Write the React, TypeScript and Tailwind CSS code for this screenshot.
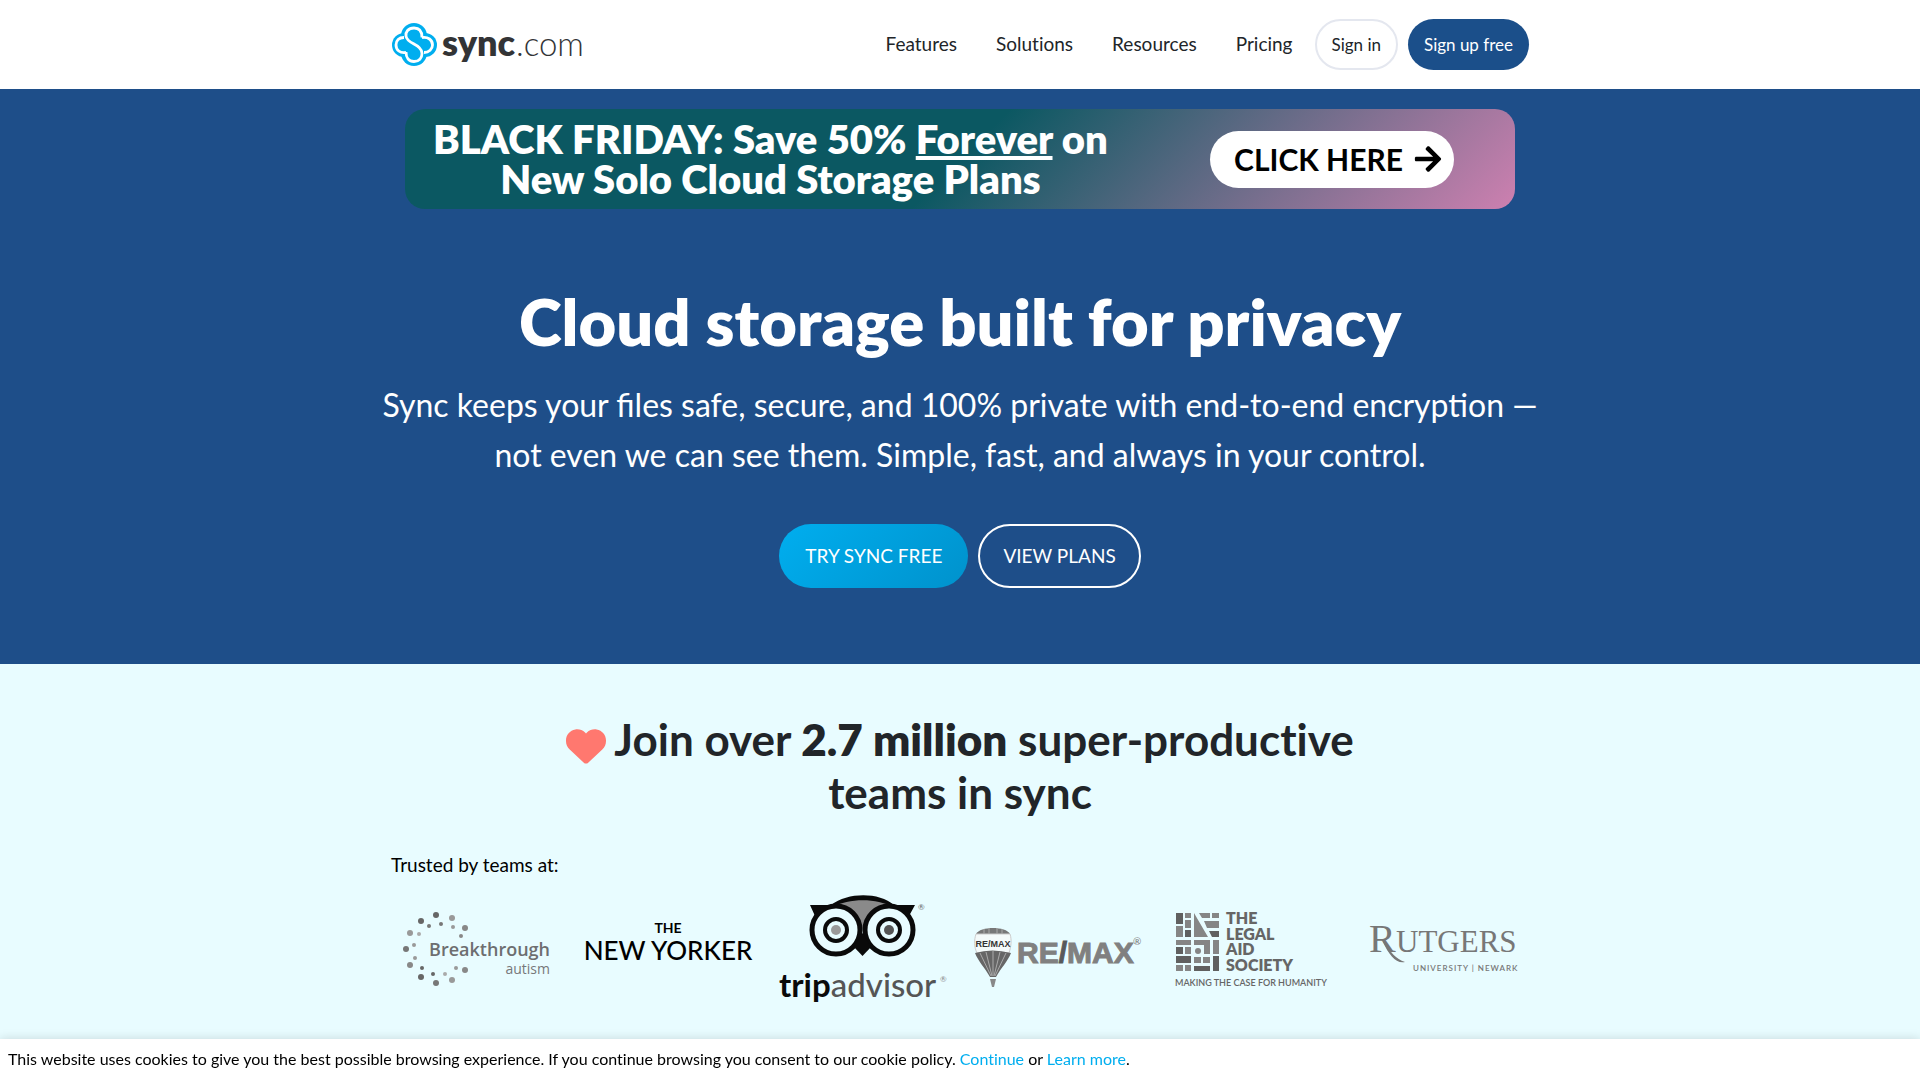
import { FaArrowRight } from "react-icons/fa";
import { FaHeart } from "react-icons/fa6";

const navLinks = ["Features", "Solutions", "Resources", "Pricing"];

const SyncLogo = () => (
    <svg width="194" height="52" viewBox="0 -3 194 52" role="img" aria-label="sync.com">
        <g fill="#00aeef">
            <circle cx="23" cy="14" r="13" />
            <circle cx="23" cy="31" r="13" />
            <circle cx="13" cy="23" r="12" />
            <circle cx="34" cy="23" r="12" />
        </g>
        <g fill="none" stroke="#fff" strokeWidth="2.8">
            <path d="M31 15.500C31 9 28 6 23 6C17 6 14.500 10 15 14C15.500 22 31 22 31 31.500C31 36 28 39.500 23 39.500C18 39.500 15 36 15 30" />
            <path d="M13 15.500C8 15.500 5 18.500 5 23C5 28 9 31.500 15 30.500" />
            <path d="M33 30.500C38 30.500 41.500 27 41.500 23C41.500 18 37 14.500 31 15.500" />
        </g>
        <text x="51" y="34" fontFamily="Lato, sans-serif" fontSize="36" fontWeight="800" fill="#333436">sync</text>
        <text x="125" y="34" fontFamily="Lato, sans-serif" fontSize="33" fontWeight="300" fill="#333436">.com</text>
    </svg>
);

const dots = [
    [33, 5, 3, "#666"], [49, 8, 3, "#999"], [18, 11, 3, "#666"], [62, 18, 3, "#888"],
    [7, 23, 3, "#999"], [3, 39, 3, "#777"], [7, 55, 3, "#888"], [18, 67, 3, "#666"],
    [33, 73, 3, "#777"], [49, 70, 3, "#999"], [62, 60, 3, "#888"], [26, 16, 2, "#777"],
    [38, 14, 2, "#777"], [50, 17, 2, "#999"], [58, 26, 2, "#888"], [16, 24, 2, "#aaa"],
    [11, 35, 2, "#999"], [12, 48, 2, "#999"], [19, 58, 2, "#666"], [30, 64, 2, "#666"],
    [42, 64, 2, "#aaa"], [53, 58, 2, "#999"],
];

const Breakthrough = () => (
    <svg width="152" height="78" viewBox="-3 0 152 78" role="img" aria-label="Breakthrough autism">
        {dots.map(([x, y, r, fill]) => (
            <circle key={`${x}-${y}`} cx={x} cy={y} r={r} fill={String(fill)} />
        ))}
        <text x="147" y="46" textAnchor="end" fontFamily="Open Sans, sans-serif" fontSize="18" fontWeight="600" fill="#6d6e70">Breakthrough</text>
        <text x="147" y="64" textAnchor="end" fontFamily="Open Sans, sans-serif" fontSize="14" fill="#77787a">autism</text>
    </svg>
);

const NewYorker = () => (
    <svg width="172" height="60" viewBox="0 0 172 60" role="img" aria-label="The New Yorker">
        <text x="84" y="14" textAnchor="middle" fontFamily="Lato, sans-serif" fontSize="14" fontWeight="700">THE</text>
        <text x="84" y="41" textAnchor="middle" fontFamily="Lato, sans-serif" fontSize="26" fontWeight="500">NEW YORKER</text>
    </svg>
);

const Tripadvisor = () => (
    <svg width="170" height="116" viewBox="0 0 170 116" role="img" aria-label="tripadvisor">
        <path d="M32 14H53C70 1 101 1 116 14H137L131 25H37Z" fill="#0a0a0a" />
        <path d="M55 16C70 7 100 7 114 16C97 17 87 26 84.500 39C82 26 73 17 55 16Z" fill="#8a8a8a" />
        <circle cx="58" cy="39" r="24" fill="#e8fcff" stroke="#0a0a0a" strokeWidth="5" />
        <circle cx="111" cy="39" r="24" fill="#e8fcff" stroke="#0a0a0a" strokeWidth="5" />
        <circle cx="58" cy="39" r="11" fill="none" stroke="#0a0a0a" strokeWidth="4" />
        <circle cx="111" cy="39" r="11" fill="none" stroke="#0a0a0a" strokeWidth="4" />
        <circle cx="58" cy="39" r="5" fill="#999" />
        <circle cx="111" cy="39" r="5" fill="#555" />
        <path d="M76 56L84.500 65L93 56L84.500 42Z" fill="#0a0a0a" />
        <text x="140" y="19" fontFamily="Lato, sans-serif" fontSize="8" fill="#666">®</text>
        <text x="1" y="106" fontFamily="Lato, sans-serif" fontSize="33" fontWeight="700" fill="#0a0a0a">
            trip<tspan fill="#555" fontWeight="500">advisor</tspan>
        </text>
        <text x="162" y="91" fontFamily="Lato, sans-serif" fontSize="8" fill="#888">®</text>
    </svg>
);

const Remax = () => (
    <svg width="172" height="80" viewBox="-1 -1 172 80" role="img" aria-label="RE/MAX">
        <path d="M4 24C8 16 34 16 38 24Z" fill="#777" />
        <path d="M4 24H38C40 30 39 37 37 43H5C2 37 2 30 4 24Z" fill="#f4fafa" stroke="#ccc" strokeWidth="1" />
        <path d="M3 43Q20 38 39 43C36 51 29 58 24 67H18C13 58 6 51 3 43Z" fill="#666" />
        <g stroke="#aaa" strokeWidth="1" fill="none">
            <path d="M8 43L19 66M14 42L20 66M21 41V66M28 42L22 66M34 43L23 66" />
            <path d="M12 19V24M17 18V24M25 18V24M30 19V24" />
        </g>
        <path d="M18 69H24L22 77H20Z" fill="#888" />
        <text x="21" y="37" textAnchor="middle" fontFamily="Liberation Sans, sans-serif" fontSize="9" fontWeight="700" fill="#333">RE/MAX</text>
        <text x="45" y="53" fontFamily="Liberation Sans, sans-serif" fontSize="30" fontWeight="700" fill="#808080" stroke="#808080" strokeWidth="1">
            RE<tspan fill="#58595b" stroke="#58595b">/</tspan>MAX
        </text>
        <text x="161" y="35" fontFamily="Lato, sans-serif" fontSize="10" fill="#777">®</text>
    </svg>
);

const LegalAid = () => (
    <svg width="156" height="86" viewBox="-4 -6 156 86" role="img" aria-label="The Legal Aid Society">
        <g fill="#858585">
            <path d="M9 1H15V6H9ZM9 8H15V16H9ZM0 14H7V25H0ZM18 1L32 25H18ZM23 1H34V6H26ZM36 1H43V6H36ZM28 9H43V16H31Z" />
            <path d="M0 28H15V33H0ZM18 28H34V42H28V33H18ZM37 28H43V42H37ZM9 35H15V42H9ZM18 45H25V51H18ZM27 45H34V51H27ZM0 53H7V59H0ZM9 53H15V59H9Z" />
            <circle cx="22" cy="39" r="3" />
        </g>
        <path d="M0 1H7V12H0ZM9 18H15V25H9ZM33 19H43V25H36ZM0 35H7V42H0ZM0 44H15V51H0ZM18 54H34V59H18ZM37 44H43V59H37Z" fill="#606060" />
        <g fontFamily="Lato, sans-serif" fontSize="16" fontWeight="800" fill="#666">
            <text x="50" y="12">THE</text>
            <text x="50" y="28">LEGAL</text>
            <text x="50" y="43">AID</text>
            <text x="50" y="59">SOCIETY</text>
        </g>
        <text x="-1" y="74" fontFamily="Lato, sans-serif" fontSize="9" fontWeight="600" fill="#666">MAKING THE CASE FOR HUMANITY</text>
    </svg>
);

const Rutgers = () => (
    <svg width="154" height="60" viewBox="-2 1 154 60" role="img" aria-label="Rutgers University Newark">
        <g fontFamily="Liberation Serif, serif" fill="#777">
            <text x="0" y="34" fontSize="40">R</text>
            <text x="27" y="34" fontSize="31">UTGERS</text>
        </g>
        <path d="M16 24C21 34 27 41 36 44C27 46 20 37 14 24Z" fill="#777" />
        <text x="44" y="53" fontFamily="Lato, sans-serif" fontSize="8" fontWeight="600" letterSpacing="1" fill="#777">UNIVERSITY | NEWARK</text>
    </svg>
);

const App = () => {
    return (
        <div className="flex min-h-screen flex-col bg-[#e8fcff] font-['Lato',sans-serif] text-[#212529]">
            <header className="bg-white">
                <div className="mx-auto flex h-[89px] max-w-[1140px] items-center justify-between px-px">
                    <a href="#"><SyncLogo /></a>
                    <div className="flex items-center">
                        <nav className="mr-[22px] flex gap-[39px] text-[19px] [font-variant-ligatures:no-common-ligatures]">
                            {navLinks.map((item) => (
                                <a key={item} href="#">{item}</a>
                            ))}
                        </nav>
                        <button className="mr-[10px] h-[51px] rounded-full border-2 border-[#e4e7ef] px-[15px] text-[17px]">Sign in</button>
                        <button className="h-[51px] rounded-full bg-[#1b4f8a] px-4 text-[17px] text-white">Sign up free</button>
                    </div>
                </div>
            </header>

            <section className="bg-[#1e4e89] pt-5 pb-[76px] text-white">
                <div className="mx-auto flex h-[100px] max-w-[1110px] items-center justify-between rounded-[20px] bg-[linear-gradient(135deg,#0b5862_50%,#cd80b0)] pr-[61px] pl-[28px]">
                    <p className="text-center text-[40px] leading-[40px] font-extrabold">
                        BLACK FRIDAY: Save 50% <span className="underline">Forever</span> on
                        <br />
                        New Solo Cloud Storage Plans
                    </p>
                    <button className="flex h-[57px] items-center gap-[10px] rounded-full bg-white pr-[11px] pl-6 text-[30px] font-bold text-black">
                        CLICK HERE <FaArrowRight className="size-[30px]" />
                    </button>
                </div>
                <div className="mx-auto max-w-[1172px]">
                    <h1 className="mt-[72px] text-center text-[65px] leading-[80px] font-extrabold">Cloud storage built for privacy</h1>
                    <p className="mt-[19px] text-center text-[32px] leading-[50px]">
                        Sync keeps your files safe, secure, and 100% private with end-to-end encryption — not even we can see them. Simple, fast, and always in your control.
                    </p>
                    <div className="mt-11 flex justify-center gap-[10px] text-[19px]">
                        <button className="h-16 rounded-full bg-[linear-gradient(135deg,#00aeef,#0092cc)] px-[26px]">TRY SYNC FREE</button>
                        <button className="h-16 rounded-full border-2 border-white px-[23px]">VIEW PLANS</button>
                    </div>
                </div>
            </section>

            <section className="mx-auto w-full max-w-[1140px] px-px pt-[49px]">
                <h2 className="mx-auto max-w-[850px] text-center text-[44px] leading-[52px] font-bold [font-variant-ligatures:no-common-ligatures]">
                    <FaHeart className="mr-2 inline size-10 align-[-10px] text-[#ff786f]" />
                    Join over <strong className="font-extrabold">2.7 million</strong> super-productive teams in sync
                </h2>
                <p className="mt-[33px] text-[19px] leading-[28px] text-black">Trusted by teams at:</p>
                <div className="mt-3 grid grid-cols-6 items-center justify-items-center gap-6">
                    <Breakthrough />
                    <NewYorker />
                    <Tripadvisor />
                    <Remax />
                    <LegalAid />
                    <Rutgers />
                </div>
            </section>

            <footer className="fixed inset-x-0 bottom-0 bg-white px-2 pt-2 pb-[9px] text-[16px] leading-6 text-black shadow-[0_0_10px_rgba(0,0,0,0.15)] [font-variant-ligatures:no-common-ligatures]">
                This website uses cookies to give you the best possible browsing experience. If you continue browsing you consent to our cookie policy.{" "}
                <a href="#" className="text-[#00aeef]">Continue</a> or <a href="#" className="text-[#00aeef]">Learn more</a>.
            </footer>
        </div>
    );
};

export default App;
